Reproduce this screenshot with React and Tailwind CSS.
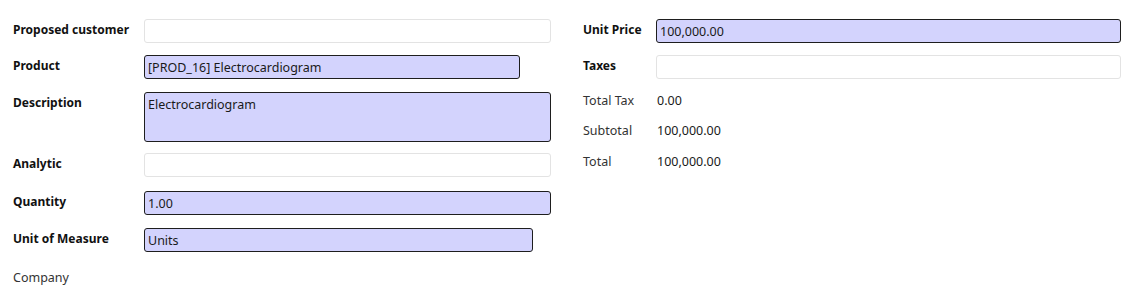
export default function App() {
  const filled =
    "h-6 rounded-[3px] border border-[#1e1e1e] bg-[#d3d3fd] px-[3px] text-[12.5px] leading-[23px] text-[#1a1a1a]";
  const empty = "h-6 rounded-[3px] border border-[#e3e3e3] bg-white";
  const bold = "w-[131px] pt-[1px] text-[12px] font-bold leading-5";

  return (
    <main className="flex w-[1143px] h-[300px] bg-white font-['Noto_Sans',sans-serif] text-[12.5px] text-[#111]">
      {/* left group */}
      <div className="flex flex-col pl-[13px] pt-[19px] w-[570px]">
        <div className="flex">
          <label className={bold}>Proposed customer</label>
          <div className={empty + " w-[407px]"} />
        </div>
        <div className="flex mt-[12px]">
          <label className={bold}>Product</label>
          <div className={filled + " w-[376px]"}>[PROD_16] Electrocardiogram</div>
        </div>
        <div className="flex mt-[13px]">
          <label className={bold}>Description</label>
          <div className="h-[50px] w-[407px] rounded-[3px] border border-[#1e1e1e] bg-[#d3d3fd] px-[3px] pt-[2px] leading-5 text-[#1a1a1a]">
            Electrocardiogram
          </div>
        </div>
        <div className="flex mt-[11px]">
          <label className={bold}>Analytic</label>
          <div className={empty + " w-[407px]"} />
        </div>
        <div className="flex mt-[14px]">
          <label className={bold}>Quantity</label>
          <div className={filled + " w-[407px]"}>1.00</div>
        </div>
        <div className="flex mt-[13px]">
          <label className={bold}>Unit of Measure</label>
          <div className={filled + " w-[389px]"}>Units</div>
        </div>
        <div className="flex mt-[16px]">
          <label className="w-[131px] leading-5 text-[#333]">Company</label>
        </div>
      </div>

      {/* right group */}
      <div className="flex flex-col pl-[13px] pt-[19px] w-[551px]">
        <div className="flex">
          <label className="w-[73px] pt-[1px] text-[12px] font-bold leading-5">Unit Price</label>
          <div className={filled + " w-[465px]"}>100,000.00</div>
        </div>
        <div className="flex mt-[12px]">
          <label className="w-[73px] pt-[1px] text-[12px] font-bold leading-5">Taxes</label>
          <div className={empty + " w-[465px]"} />
        </div>
        <div className="flex mt-[12px] leading-5">
          <span className="w-[74px] text-[#333]">Total Tax</span>
          <span className="text-[#1a1a1a]">0.00</span>
        </div>
        <div className="flex mt-[10px] leading-5">
          <span className="w-[74px] text-[#333]">Subtotal</span>
          <span className="text-[#1a1a1a]">100,000.00</span>
        </div>
        <div className="flex mt-[11px] leading-5">
          <span className="w-[74px] text-[#333]">Total</span>
          <span className="text-[#1a1a1a]">100,000.00</span>
        </div>
      </div>
    </main>
  );
}
